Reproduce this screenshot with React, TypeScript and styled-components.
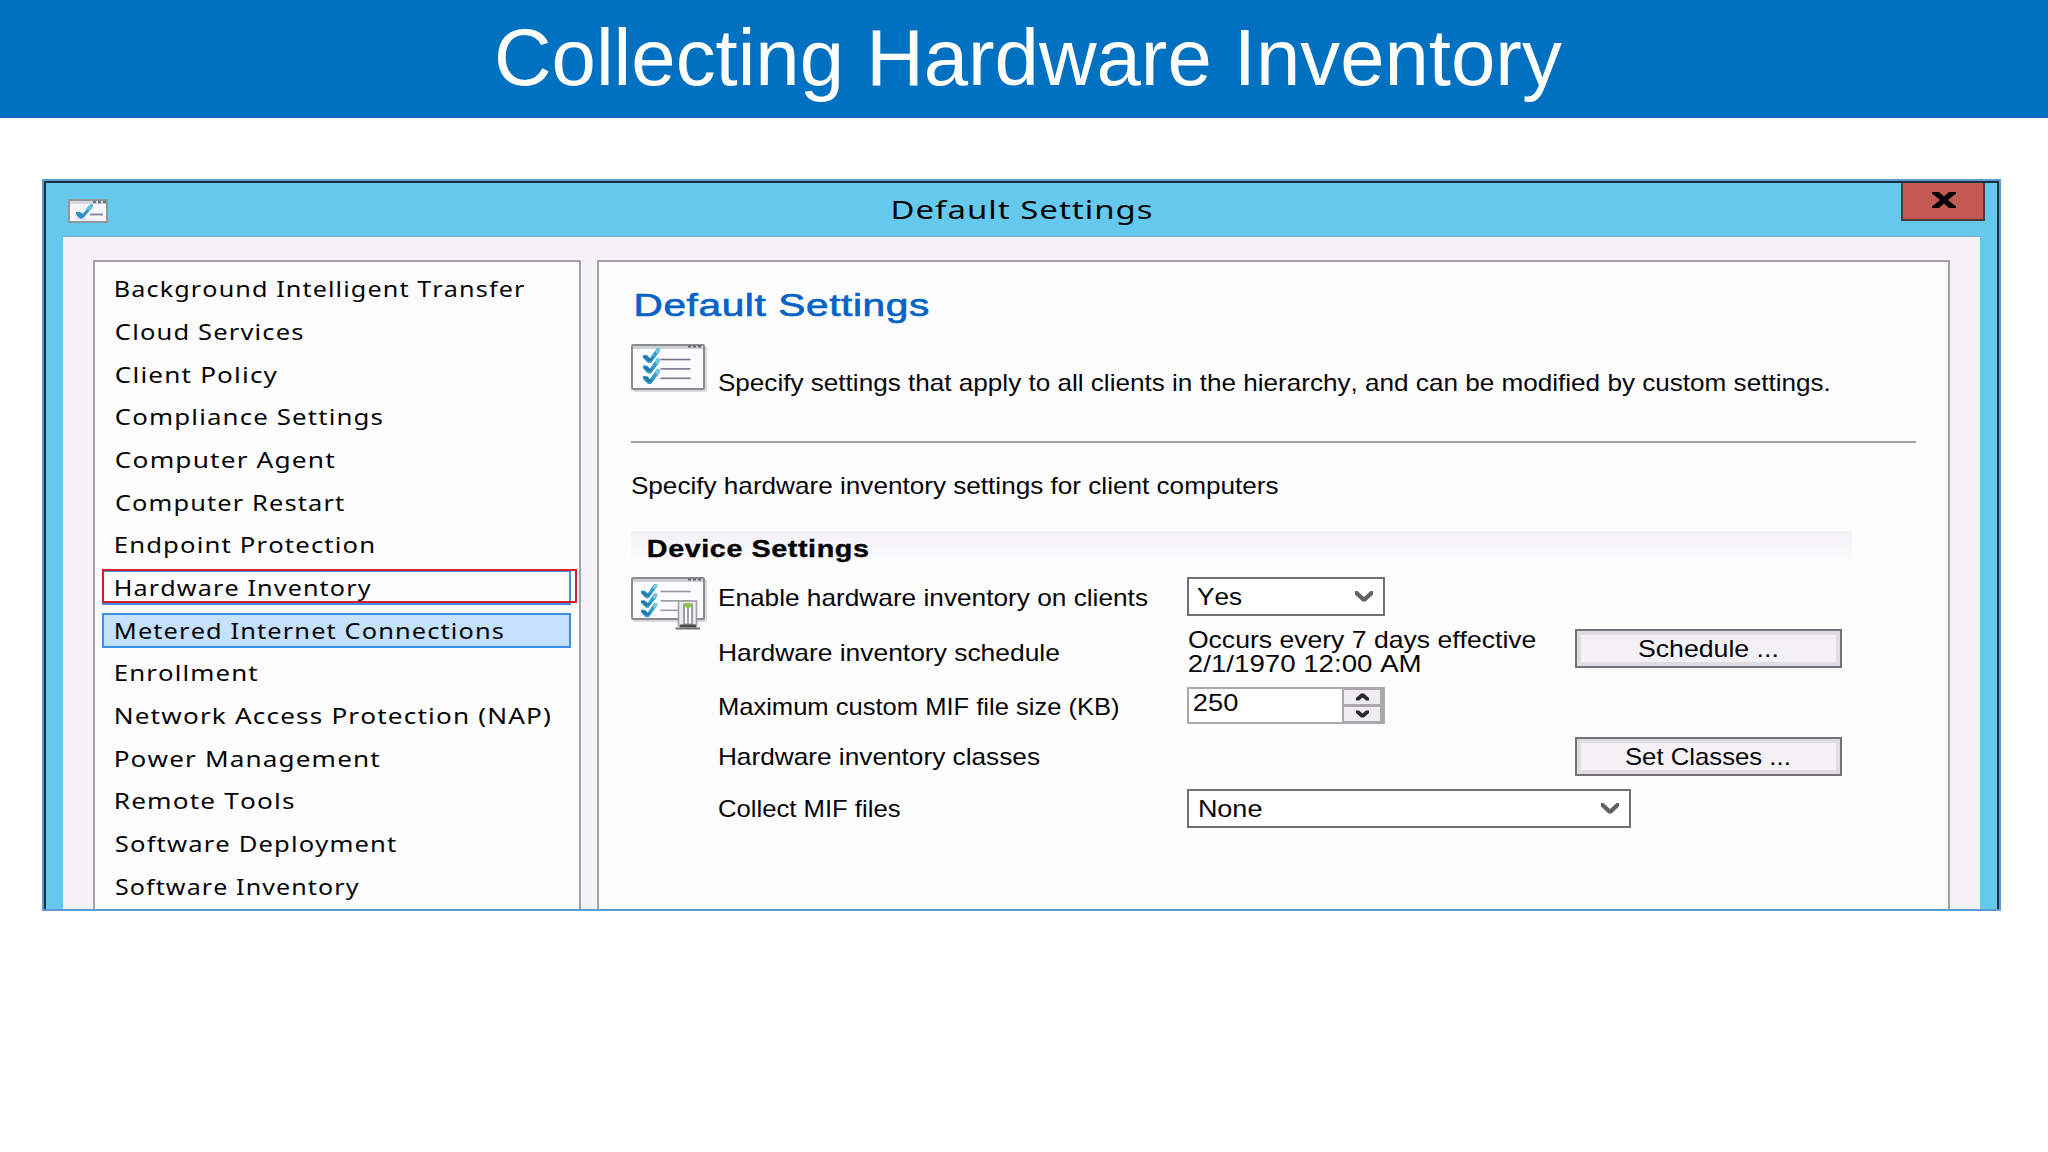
import React from "react";
import styled, { createGlobalStyle } from "styled-components";

const UI = '"Noto Sans", "Open Sans", sans-serif';
const SANS = '"Liberation Sans", Arial, sans-serif';

const Global = createGlobalStyle`
  * { box-sizing: border-box; }
  body { margin: 0; background: #fefefe; color: #050507; overflow: hidden; }
`;

/* ---------- text that is stretched to a set ink width ---------- */

type Face = { family: string; size: number; weight?: number; spacing?: number };

const listFace: Face = { family: UI, size: 22.6, spacing: 1 };
const formFace: Face = { family: SANS, size: 24 };

const Holder = styled.span<{ $w: number; $line: number }>`
  display: block;
  flex: none;
  width: ${(p) => p.$w}px;
  height: ${(p) => p.$line}px;
  line-height: ${(p) => p.$line}px;
  text-align: left;
`;

const Ink = styled.span<{ $face: Face; $stroke?: number }>`
  display: inline-block;
  vertical-align: top;
  white-space: pre;
  font-family: ${(p) => p.$face.family};
  font-size: ${(p) => p.$face.size}px;
  font-weight: ${(p) => p.$face.weight ?? 400};
  letter-spacing: ${(p) => p.$face.spacing ?? 0}px;
  font-kerning: none;
  transform-origin: 0 0;
  -webkit-text-stroke: ${(p) => p.$stroke ?? 0}px currentColor;
`;

function inkBox(text: string, face: Face) {
  const ctx = document.createElement("canvas").getContext("2d")!;
  ctx.font = `${face.weight ?? 400} ${face.size}px ${face.family}`;
  ctx.fontKerning = "none";
  const m = ctx.measureText(text);
  const gaps = (text.length - 1) * (face.spacing ?? 0);
  return {
    left: -m.actualBoundingBoxLeft,
    width: m.actualBoundingBoxRight + m.actualBoundingBoxLeft + gaps,
  };
}

function Fit(props: { text: string; w: number; face: Face; line?: number; stroke?: number }) {
  const { text, w, face, line = 28, stroke } = props;
  const box = React.useMemo(() => inkBox(text, face), [text, face]);
  const transform = `scaleX(${w / box.width}) translateX(${-box.left}px)`;
  return (
    <Holder $w={w} $line={line}>
      <Ink $face={face} $stroke={stroke} style={{ transform }}>
        {text}
      </Ink>
    </Holder>
  );
}

/* ---------- slide ---------- */

const Slide = styled.main`
  width: 2048px;
  height: 1152px;
  overflow: hidden;
`;

const Banner = styled.h1`
  margin: 0;
  height: 118px;
  padding: 10.5px 0 0 497.5px;
  background: #0070c0;
  border-bottom: 1px solid #1c62b3;
  color: #fff;
`;

const Window = styled.section`
  width: 1959px;
  height: 732px;
  margin: 61px 0 0 42px;
  border: 2px solid #5c9bcd;
  background: #64c9ec;
`;

const Frame = styled.div`
  height: 728px;
  display: flex;
  flex-direction: column;
  border: 2px solid #17303f;
  border-bottom: 0;
`;

const TitleBar = styled.header`
  flex: none;
  height: 54px;
  display: grid;
  grid-template-columns: 1fr auto 1fr;
  padding: 0 12px 0 21.5px;
`;

const TitleIcon = styled.span`
  display: block;
  padding-top: 16px;
  line-height: 0;
`;

const TitleText = styled.div`
  padding: 11px 8px 0 0;
`;

const CloseButton = styled.button`
  justify-self: end;
  width: 84px;
  height: 39px;
  margin-top: -1px;
  padding: 0 0 2px 2px;
  border: 2px solid #4a3a40;
  border-top: 1px solid #17303f;
  background: #c45953;
  line-height: 0;
`;

const Body = styled.div`
  flex: 1;
  min-height: 0;
  margin: 0 17px;
  padding: 23px 30px 0;
  display: flex;
  gap: 16px;
  overflow: hidden;
  background: #f5f2f7;
  box-shadow: 0 -1px 0 #7fa9d3;
`;

const Panel = styled.div<{ $w?: number }>`
  flex: ${(p) => (p.$w ? `0 0 ${p.$w}px` : 1)};
  border: 2px solid #a3a1a6;
  border-bottom: 0;
  background: #fefdfe;
`;

/* ---------- category list ---------- */

const List = styled.ul`
  list-style: none;
  margin: 0;
  padding: 5.6px 8px 0 7px;
`;

const Row = styled.li`
  height: 42.68px;
  display: flex;
  align-items: center;
`;

const Item = styled.div<{ $edge?: string; $fill?: string }>`
  position: relative;
  width: 469px;
  height: 35px;
  display: flex;
  align-items: center;
  padding: 1px 0 0 12px;
  border: 2px solid ${(p) => p.$edge ?? "transparent"};
  background: ${(p) => p.$fill ?? "transparent"};
`;

const RedFrame = styled.span`
  position: absolute;
  left: -2px;
  top: -3px;
  width: 475px;
  height: 34px;
  border: 2px solid #d81e28;
`;

type Category = { name: string; w: number; state?: "marked" | "selected" };

const categories: Category[] = [
  { name: "Background Intelligent Transfer", w: 408 },
  { name: "Cloud Services", w: 186.5 },
  { name: "Client Policy", w: 161.5 },
  { name: "Compliance Settings", w: 266 },
  { name: "Computer Agent", w: 218.5 },
  { name: "Computer Restart", w: 228 },
  { name: "Endpoint Protection", w: 258 },
  { name: "Hardware Inventory", w: 255, state: "marked" },
  { name: "Metered Internet Connections", w: 387, state: "selected" },
  { name: "Enrollment", w: 141.5 },
  { name: "Network Access Protection (NAP)", w: 434 },
  { name: "Power Management", w: 263.5 },
  { name: "Remote Tools", w: 177.5 },
  { name: "Software Deployment", w: 280 },
  { name: "Software Inventory", w: 243 },
];

/* ---------- settings pane ---------- */

const Pane = styled.div`
  padding: 26px 0 0 32px;
`;

const Heading = styled.h2`
  margin: 0 0 0 5px;
  color: #0563c6;
`;

const Intro = styled.div`
  display: flex;
  align-items: flex-start;
  height: 99px;
  margin-top: 22px;
  border-bottom: 2px solid #a0a0a2;
  width: 1285px;
`;

const IconCell = styled.span`
  flex: none;
  width: 88px;
  line-height: 0;
`;

const IntroText = styled.div`
  padding-top: 24.5px;
`;

const Note = styled.div`
  padding: 29px 0 0 1px;
`;

const SectionBar = styled.div`
  width: 1221px;
  height: 34px;
  margin-top: 31px;
  padding: 3.5px 0 0 17px;
  background: linear-gradient(#f3f1f5, #fdfcfe);
`;

const Form = styled.div`
  display: grid;
  grid-template-columns: 87.5px 468.5px 387.5px 267px;
  grid-template-rows: 39px 47px 38px 40px 39px;
  row-gap: 12px;
  margin-top: 12px;
  line-height: 0;
`;

const Cell = styled.div<{ $col: number; $row: number; $span?: number; $top?: number; $left?: number }>`
  grid-column: ${(p) => p.$col} / span ${(p) => p.$span ?? 1};
  grid-row: ${(p) => p.$row};
  padding-top: ${(p) => p.$top ?? 0}px;
  padding-left: ${(p) => p.$left ?? 0}px;
`;

const Select = styled.div<{ $w: number; $pad: number }>`
  width: ${(p) => p.$w}px;
  height: 39px;
  display: flex;
  align-items: center;
  justify-content: space-between;
  padding: 0 10px 0 ${(p) => p.$pad}px;
  border: 2px solid #717075;
  background: #fff;
`;

const PushButton = styled.button`
  width: 267px;
  height: 39px;
  padding: 0 1px 0 0;
  display: flex;
  align-items: center;
  justify-content: center;
  border: 2px solid #727176;
  background: #f3f1f5;
  box-shadow: inset 0 0 0 4px #dfdde1;
  color: inherit;
`;

const Spinner = styled.div`
  width: 198px;
  height: 37px;
  display: flex;
  justify-content: space-between;
  border: 2px solid #aaa8ac;
  padding-left: 5px;
  background: #fff;
`;

const SpinColumn = styled.div`
  width: 41px;
  display: flex;
  flex-direction: column;
  gap: 3px;
  padding: 1px 3px 1px 2px;
  background: #aaa8ac;
`;

const SpinButton = styled.span`
  flex: 1;
  display: flex;
  align-items: center;
  justify-content: center;
  background: #efedf0;
`;

/* ---------- drawings ---------- */

function Check({ x, y, s = 1 }: { x: number; y: number; s?: number }) {
  return (
    <g transform={`translate(${x} ${y}) scale(${s})`}>
      <path d="M0 7h4l3 3L14 0h3v3L8 15H5L0 10z" fill="#2e9fd0" />
      <path d="M0 8l5 5h3l3-4-4 2-3-3z" fill="#24759f" />
      <path d="M12 3l3-3h2v3l-3 3z" fill="#74c9e5" />
    </g>
  );
}

function ListSheet({ h, checkX, device }: { h: number; checkX: number; device?: boolean }) {
  const first = device ? 7 : 4;
  const step = device ? 9.5 : 10.5;
  return (
    <svg width="78" height="54" viewBox="0 0 78 54">
      <rect x="2" y="2" width="74" height={h} rx="2" fill="#d9d8da" />
      <rect x="1" y="1" width="72" height={h - 2} rx="1" fill="#fcfbfd" stroke="#8b8a8e" strokeWidth="2" />
      <rect x="2" y="2" width="70" height="3" fill="#cdd1d1" />
      <path d="M57 2.5h3M62 2.5h3M67 2.5h3" stroke="#656469" strokeWidth="2" />
      {[0, 1, 2].map((i) => (
        <React.Fragment key={i}>
          <Check x={checkX} y={first + i * step} s={device ? 0.95 : 1} />
          <path
            d={`M29.500 ${(device ? 14.5 : 15.5) + i * 9.4}h30`}
            stroke={device ? "#99979c" : "#79738a"}
            strokeWidth="1.600"
          />
        </React.Fragment>
      ))}
      {device && (
        <g>
          <rect x="47.500" y="24" width="18" height="25" fill="#eceaec" stroke="#a09fa2" strokeWidth="1.600" />
          <path d="M53 27.500h8v20h-8zM57 27v20" fill="#fff" stroke="#a09fa2" strokeWidth="2" />
          <path d="M53 29.500l2-3.500h4l2 3.500-2 1h-4z" fill="#86c83c" />
          <path d="M49 49h16" stroke="#4a494d" strokeWidth="3" />
          <path d="M44.500 51.500h24.500" stroke="#707074" strokeWidth="2" />
        </g>
      )}
    </svg>
  );
}

function WindowGlyph() {
  return (
    <svg width="40" height="24" viewBox="0 0 40 24">
      <rect x="1" y="1" width="38" height="22" fill="#f8f6fb" stroke="#91979b" strokeWidth="2" />
      <rect x="2" y="2" width="36" height="3" fill="#d6d9dc" />
      <path d="M25 3h3M30 3h3M35 3h3" stroke="#6b777e" strokeWidth="2.500" />
      <path d="M8 13h10v8H8z" fill="#dfe4ef" />
      <path d="M8 13h4l3 2 6-8 3-2v4l-8 9-3 2-3-2-2-3z" fill="#2f93c2" />
      <path d="M18 10l4-5h3v3l-4 4z" fill="#5ec0dd" />
      <path d="M22 15.500h13" stroke="#8f89ab" strokeWidth="2" />
    </svg>
  );
}

function CloseGlyph() {
  return (
    <svg width="24" height="16" viewBox="0 0 24 16">
      <path d="M0 0h7l5 4.500L17 0h7v1.500L16 8l8 6.500V16h-7l-5-4.500L7 16H0v-1.500L8 8 0 1.500z" fill="#0a0404" />
    </svg>
  );
}

function Chevron() {
  return (
    <svg width="18" height="11" viewBox="0 0 18 11">
      <path d="M0 0h2.500L9 6 15.500 0H18v3.500L10.500 10.500h-3L0 3.500z" fill="#626166" />
    </svg>
  );
}

function Caret({ up }: { up?: boolean }) {
  return (
    <svg width="13" height="8" viewBox="0 0 13 8">
      <path
        d="M0 .5h3l3.500 3L10 .5h3v2.500L8 7.500H5L0 3z"
        fill="#2b2a2d"
        transform={up ? "rotate(180 6.5 4)" : undefined}
      />
    </svg>
  );
}

const bannerFace: Face = { family: SANS, size: 79.5 };
const titleFace: Face = { family: UI, size: 26, spacing: 0.8 };
const headingFace: Face = { family: SANS, size: 32, spacing: 0.5 };
const sectionFace: Face = { family: SANS, size: 24, weight: 700, spacing: 0.5 };

export default function App() {
  return (
    <Slide>
      <Global />
      <Banner>
        <Fit text="Collecting Hardware Inventory" w={1064} face={bannerFace} line={94} />
      </Banner>
      <Window>
        <Frame>
          <TitleBar>
            <TitleIcon>
              <WindowGlyph />
            </TitleIcon>
            <TitleText>
              <Fit text="Default Settings" w={259} face={titleFace} line={30} />
            </TitleText>
            <CloseButton>
              <CloseGlyph />
            </CloseButton>
          </TitleBar>
          <Body>
            <Panel $w={488}>
              <List>
                {categories.map((c) => (
                  <Row key={c.name}>
                    <Item
                      $edge={c.state && "#3a90e8"}
                      $fill={c.state === "selected" ? "#c4e1fd" : undefined}
                    >
                      <Fit text={c.name} w={c.w} face={listFace} />
                      {c.state === "marked" && <RedFrame />}
                    </Item>
                  </Row>
                ))}
              </List>
            </Panel>
            <Panel>
              <Pane>
                <Heading>
                  <Fit text="Default Settings" w={292} face={headingFace} line={34} stroke={0.7} />
                </Heading>
                <Intro>
                  <IconCell>
                    <ListSheet h={46} checkX={12} />
                  </IconCell>
                  <IntroText>
                    <Fit
                      text="Specify settings that apply to all clients in the hierarchy, and can be modified by custom settings."
                      w={1110}
                      face={formFace}
                    />
                  </IntroText>
                </Intro>
                <Note>
                  <Fit text="Specify hardware inventory settings for client computers" w={646.5} face={formFace} />
                </Note>
                <SectionBar>
                  <Fit text="Device Settings" w={220.5} face={sectionFace} stroke={0.4} />
                </SectionBar>
                <Form>
                  <Cell $col={1} $row={1}>
                    <ListSheet h={43} checkX={10} device />
                  </Cell>
                  <Cell $col={2} $row={1} $top={6.5}>
                    <Fit text="Enable hardware inventory on clients" w={429} face={formFace} />
                  </Cell>
                  <Cell $col={3} $row={1}>
                    <Select $w={198} $pad={8}>
                      <Fit text="Yes" w={45} face={formFace} />
                      <Chevron />
                    </Select>
                  </Cell>

                  <Cell $col={2} $row={2} $top={11}>
                    <Fit text="Hardware inventory schedule" w={340.5} face={formFace} />
                  </Cell>
                  <Cell $col={3} $row={2} $left={2}>
                    <Fit text="Occurs every 7 days effective" w={347} face={formFace} line={24} />
                    <Fit text="2/1/1970 12:00 AM" w={231.5} face={formFace} line={24} />
                  </Cell>
                  <Cell $col={4} $row={2} $top={1}>
                    <PushButton>
                      <Fit text="Schedule ..." w={138} face={formFace} />
                    </PushButton>
                  </Cell>

                  <Cell $col={2} $row={3} $top={5.5}>
                    <Fit text="Maximum custom MIF file size (KB)" w={399.5} face={formFace} />
                  </Cell>
                  <Cell $col={3} $row={3}>
                    <Spinner>
                      <Fit text="250" w={44} face={formFace} />
                      <SpinColumn>
                        <SpinButton>
                          <Caret up />
                        </SpinButton>
                        <SpinButton>
                          <Caret />
                        </SpinButton>
                      </SpinColumn>
                    </Spinner>
                  </Cell>

                  <Cell $col={2} $row={4} $top={6}>
                    <Fit text="Hardware inventory classes" w={321} face={formFace} />
                  </Cell>
                  <Cell $col={4} $row={4}>
                    <PushButton>
                      <Fit text="Set Classes ..." w={163} face={formFace} />
                    </PushButton>
                  </Cell>

                  <Cell $col={2} $row={5} $top={5.5}>
                    <Fit text="Collect MIF files" w={181.5} face={formFace} />
                  </Cell>
                  <Cell $col={3} $row={5} $span={2}>
                    <Select $w={444} $pad={9.5}>
                      <Fit text="None" w={63} face={formFace} />
                      <Chevron />
                    </Select>
                  </Cell>
                </Form>
              </Pane>
            </Panel>
          </Body>
        </Frame>
      </Window>
    </Slide>
  );
}
